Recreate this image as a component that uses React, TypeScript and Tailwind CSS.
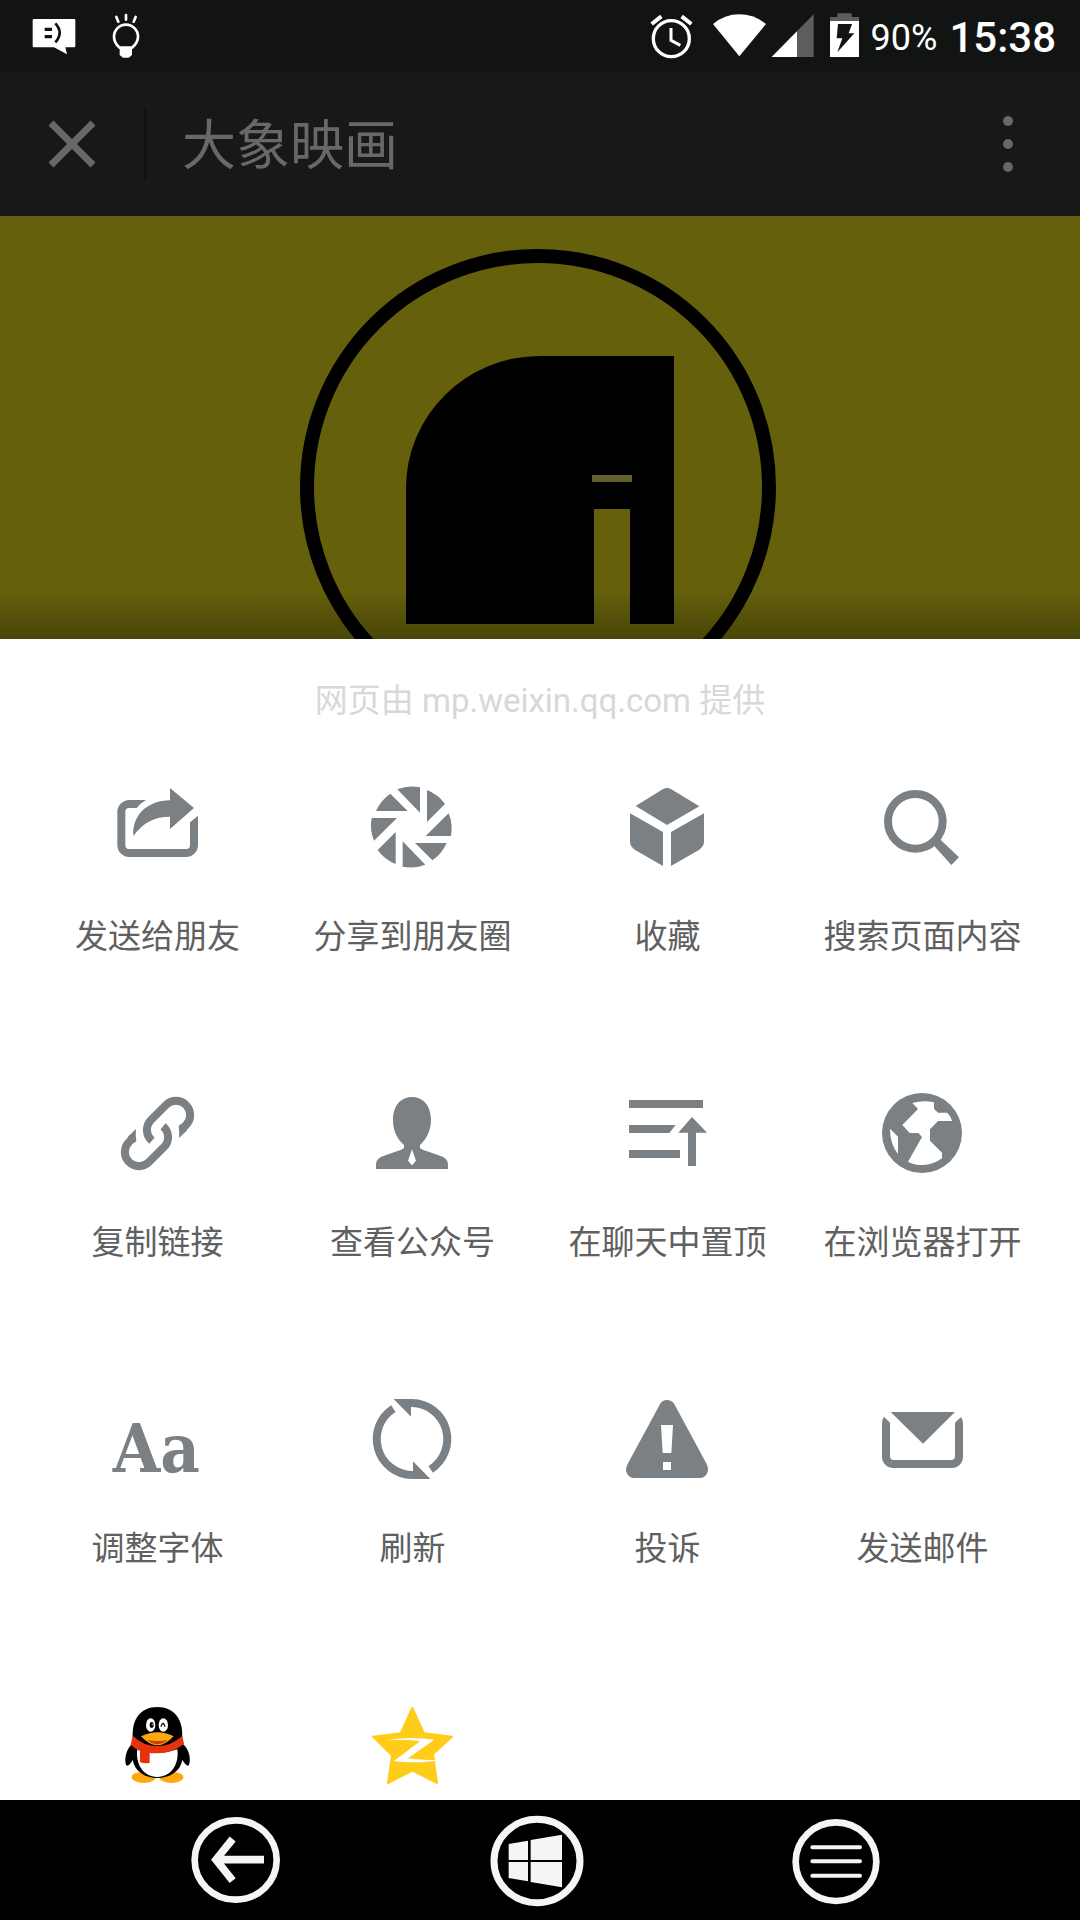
import type { ReactNode } from 'react'

type Action = { label: string; viewBox: string; icon: ReactNode; hideLabel?: boolean }

const chainLink = (
  <>
    <path d="M276 212A42 42 0 0 1 273 150L318 105A42 42 0 0 1 378 165L365 178" fill="none" stroke="currentColor" strokeWidth="24" />
    <path d="M356 169Q359 186 357 204L382 180L362 162Z" />
  </>
)

const shutterHalf = (
  <path d="M1012 88A120 120 0 0 1 1080 82V158ZM1101 90A120 120 0 0 1 1155 132L1101 186ZM1166 160A120 120 0 0 1 1173 228H1097ZM1160 249A120 120 0 0 1 1117 301L1065 249Z" />
)

const refreshHalf = (
  <>
    <path d="M1056 69A108 108 0 0 1 1112 268" fill="none" stroke="currentColor" strokeWidth="24" />
    <path d="M1001 57H1058V81H1053V110Z" />
  </>
)

const actions: Action[] = [
  {
    label: '发送给朋友',
    viewBox: '150 60 285 285',
    icon: (
      <>
        <path d="M258 120H208A36 36 0 0 0 172 156V255A36 36 0 0 0 208 291H378A36 36 0 0 0 414 255V167L390 187V256Q390 267 379 267H207Q196 267 196 256V155Q196 144 207 144H230Q242 129 258 120Z" />
        <path d="M330 84L402 144L330 207V170C285 170 250 186 220 228C216 165 262 122 330 121Z" />
      </>
    ),
  },
  {
    label: '分享到朋友圈',
    viewBox: '915 60 285 285',
    icon: (
      <>
        {shutterHalf}
        <g transform="rotate(180 1054 201)">{shutterHalf}</g>
      </>
    ),
  },
  {
    label: '收藏',
    viewBox: '180 60 285 285',
    icon: (
      <path d="M227 138L308 88Q321 80 334 88L418 139L321 195ZM210 160L309 216V318L224 269Q210 258 210 246ZM432 160L333 216V318L418 269Q432 258 432 246Z" />
    ),
  },
  {
    label: '搜索页面内容',
    viewBox: '945 60 285 285',
    icon: (
      <>
        <circle cx="1066" cy="184" r="82" fill="none" stroke="currentColor" strokeWidth="24" />
        <path d="M1140 238L1197 292L1174 315L1122 257Z" />
      </>
    ),
  },
  {
    label: '复制链接',
    viewBox: '150 48 285 285',
    icon: (
      <>
        {chainLink}
        <g transform="rotate(180 292.5 190.5)">{chainLink}</g>
      </>
    ),
  },
  {
    label: '查看公众号',
    viewBox: '915 48 285 285',
    icon: (
      <>
        <path d="M1056 81C1092 81 1113 110 1113 150C1113 184 1097 210 1080 225V234Q1084 239 1106 245L1148 260Q1164 267 1164 284V297H948V284Q948 267 964 260L1006 245Q1028 239 1032 234V225C1013 209 999 184 999 150C999 110 1020 81 1056 81Z" />
        <path d="M1056 238L1068 272L1056 286L1044 272Z" fill="white" />
      </>
    ),
  },
  {
    label: '在聊天中置顶',
    viewBox: '180 48 285 285',
    icon: (
      <path d="M207 90H429V114H207ZM207 165H347L328 189H207ZM207 240H360V264H207ZM396 141L441 188H408V288H384V188H355Z" />
    ),
  },
  {
    label: '在浏览器打开',
    viewBox: '945 48 285 285',
    icon: (
      <>
        <circle cx="1086" cy="189" r="120" />
        <path
          d="M1057 99Q1090 90 1122 97V116L1134 128H1162Q1172 138 1176 153H1134L1110 178V212L1146 248V265Q1118 286 1086 285Q1062 285 1044 275L1086 201L1075 189H1049L1027 165L1074 117ZM990 176L1014 200V252Q990 222 990 176Z"
          fill="white"
        />
      </>
    ),
  },
  {
    label: '调整字体',
    viewBox: '150 36 285 285',
    icon: (
      <text
        x="289"
        y="276"
        textAnchor="middle"
        className="font-['Liberation_Sans_Narrow','DejaVu_Serif_Condensed','DejaVu_Serif',serif] text-[204px] font-bold"
      >
        Aa
      </text>
    ),
  },
  {
    label: '刷新',
    viewBox: '915 36 285 285',
    icon: (
      <>
        {refreshHalf}
        <g transform="rotate(180 1056 177)">{refreshHalf}</g>
      </>
    ),
  },
  {
    label: '投诉',
    viewBox: '180 36 285 285',
    icon: (
      <>
        <path d="M299 74Q306 60 321 60Q336 60 344 74L440 252Q448 270 440 282Q433 294 420 294H222Q209 294 202 282Q194 270 203 252Z" />
        <path d="M303 135H339L334 219H308ZM309 246H333V270H309Z" fill="white" />
      </>
    ),
  },
  {
    label: '发送邮件',
    viewBox: '945 36 285 285',
    icon: (
      <path d="M992 96H1185L1089 191ZM972 110L990 128V229Q990 240 1001 240H1174Q1185 240 1185 229V128L1203 111Q1209 120 1209 130V230A34 34 0 0 1 1175 264H1000A34 34 0 0 1 966 230V130Q966 118 972 110Z" />
    ),
  },
  {
    label: 'QQ',
    hideLabel: true,
    viewBox: '30 24 285 285',
    icon: (
      <>
        <ellipse cx="131" cy="262" rx="36" ry="17" fill="#ffa70f" />
        <ellipse cx="214" cy="262" rx="36" ry="17" fill="#ffa70f" />
        <path d="M96 162C80 176 72 206 78 224Q84 234 98 210C104 245 136 264 172 264C208 264 241 245 247 210Q262 234 267 224C274 206 266 176 249 162Z" fill="black" />
        <path d="M99 150C92 88 122 51 172 51C222 51 252 88 246 150L240 175H105Z" fill="black" />
        <path d="M112 178Q172 200 232 178C238 220 216 261 172 261C128 261 106 220 112 178Z" fill="white" />
        <path d="M98 137Q130 168 172 168Q214 168 247 137L252 162Q216 190 172 190Q160 190 149 189V218Q134 222 120 216V183Q104 176 92 164Z" fill="#e8320f" />
        <path d="M123 139Q150 127 172 127Q196 127 221 139Q196 166 172 166Q148 166 123 139Z" fill="#ffa70f" />
        <path d="M142 150Q172 156 202 150Q172 176 142 150Z" fill="#c7430b" />
        <ellipse cx="152" cy="105" rx="14" ry="20" fill="white" />
        <ellipse cx="190" cy="105" rx="14" ry="20" fill="white" />
        <ellipse cx="155" cy="105" rx="6" ry="9" fill="black" />
        <circle cx="157" cy="103" r="2" fill="white" />
        <path d="M183 110Q189 90 195 110" fill="none" stroke="black" strokeWidth="4" />
      </>
    ),
  },
  {
    label: 'QQ空间',
    hideLabel: true,
    viewBox: '795 24 285 285',
    icon: (
      <>
        <path
          d="M937 54L972 130L1056 140L999 192L1011 279L937 242L864 279L876 197L819 140L902 130Z"
          fill="#ffcc1a"
          stroke="#ffcc1a"
          strokeWidth="6"
          strokeLinejoin="round"
        />
        <path d="M858 151Q930 138 1003 149L924 205Q976 213 1018 209Q970 222 881 214L960 154Q910 147 858 151Z" fill="white" />
      </>
    ),
  },
]

function StatusBar() {
  return (
    <div className="flex h-[72px] items-center justify-between bg-[#121414] pr-[24px] pl-[32px] text-white">
      <div className="flex items-center gap-[36px]">
        <svg viewBox="96 36 132 144" className="h-[48px] w-[44px]" fill="white">
          <path d="M102 57H222Q226 57 226 61V138Q226 142 222 142H196L201 163L162 142H102Q98 142 98 138V61Q98 57 102 57Z" />
          <path d="M134 83H156V93H134ZM134 105H156V115H134Z" fill="#121414" />
          <path d="M166 70Q192 98 166 127" fill="none" stroke="#121414" strokeWidth="8" />
        </svg>
        <svg viewBox="336 36 84 144" className="h-[48px] w-[28px]" fill="none" stroke="white">
          <path d="M359 143C346 132 342 122 342 110A36 36 0 0 1 414 110C414 122 409 132 396 143Z" strokeWidth="8" />
          <path d="M359 143H396V165L386 173H369L359 165Z" fill="white" stroke="none" />
          <path d="M378 45V59M349 51L355 65M407 51L401 65" strokeWidth="8" strokeLinecap="round" />
        </svg>
      </div>
      <div className="flex items-center">
        <svg viewBox="90 36 129 144" className="h-[48px] w-[43px]" fill="none" stroke="white">
          <circle cx="154" cy="116" r="54" strokeWidth="10" />
          <path d="M153 84V121L181 136" strokeWidth="9" />
          <path d="M95 72L124 49M185 49L214 72" strokeWidth="12" />
        </svg>
        <svg viewBox="276 36 165 144" className="ml-[19px] h-[48px] w-[55px]" fill="white">
          <path d="M279 72Q314 43 358 43Q402 43 438 72L358 169Z" />
        </svg>
        <svg viewBox="453 36 129 144" className="ml-[4px] h-[48px] w-[43px]">
          <path d="M581 43V171H455Z" fill="#5c5e5e" />
          <path d="M531 94V171H455Z" fill="white" />
        </svg>
        <svg viewBox="630 36 87 144" className="ml-[16px] h-[48px] w-[29px]">
          <path d="M630 65V51H652V40H695V51H717V65Z" fill="#5c5e5e" />
          <path d="M630 63H717V171H630Z" fill="white" />
          <path d="M654 72H696L686 100H703L652 157L667 115H650Z" fill="#121414" />
        </svg>
        <span className="ml-[12px] pt-[4px] text-[36px] leading-[48px]">90%</span>
        <span className="ml-[12px] pt-[4px] text-[42px] leading-[48px] font-medium">15:38</span>
      </div>
    </div>
  )
}

function TitleBar() {
  return (
    <header className="flex h-[144px] items-center bg-[#17181a] text-[#686868]">
      <button type="button" aria-label="关闭" className="flex h-full w-[144px] items-center justify-center">
        <svg viewBox="0 0 48 48" className="h-[48px] w-[48px]" fill="none" stroke="currentColor" strokeWidth="7">
          <path d="M3 3L45 45M45 3L3 45" />
        </svg>
      </button>
      <div className="h-[72px] w-[2px] bg-[#101113]" />
      <h1 className="ml-[36px] flex-1 pt-[6px] text-[54px] leading-[72px]">大象映画</h1>
      <button type="button" aria-label="更多" className="flex h-full w-[144px] flex-col items-center justify-center gap-[13px]">
        <span className="h-[10px] w-[10px] rounded-full bg-[#686868]" />
        <span className="h-[10px] w-[10px] rounded-full bg-[#686868]" />
        <span className="h-[10px] w-[10px] rounded-full bg-[#686868]" />
      </button>
    </header>
  )
}

function Banner() {
  return (
    <div className="h-[423px] bg-[#65600b]">
      <svg viewBox="0 0 1080 423" preserveAspectRatio="xMidYMid slice" className="h-full w-full">
        <defs>
          <linearGradient id="shade" x1="0" y1="0" x2="0" y2="1">
            <stop offset="0" stopColor="black" stopOpacity="0" />
            <stop offset="1" stopColor="black" stopOpacity="0.28" />
          </linearGradient>
        </defs>
        <circle cx="538" cy="271" r="231" fill="none" stroke="black" strokeWidth="14" />
        <path d="M540 140H674V408H630V293H594V408H406V272A134 132 0 0 1 540 140Z" />
        <rect x="592" y="259" width="40" height="7" fill="#655f2f" />
        <rect y="375" width="1080" height="48" fill="url(#shade)" />
      </svg>
    </div>
  )
}

function ShareSheet() {
  return (
    <main className="flex-1 bg-white px-[30px] pt-[38px]">
      <p className="mb-[55px] text-center text-[33px] leading-[48px] text-[#d8d8d8]">网页由 mp.weixin.qq.com 提供</p>
      <div className="grid grid-cols-4 gap-y-[125px]">
        {actions.map((action) => (
          <button key={action.label} type="button" aria-label={action.label} className="flex flex-col items-center gap-[38px] whitespace-nowrap">
            <svg viewBox={action.viewBox} className="h-[95px] w-[95px] text-[#7b8084]" fill="currentColor">
              {action.icon}
            </svg>
            {!action.hideLabel && <span className="text-[33px] leading-[48px] text-[#606060]">{action.label}</span>}
          </button>
        ))}
      </div>
    </main>
  )
}

function NavBar() {
  return (
    <nav className="flex h-[120px] items-center justify-center bg-black pr-[8px] text-[#f5f5f5]">
      <button type="button" aria-label="返回" className="flex w-[300px] justify-center">
        <svg viewBox="264 366 288 288" className="h-[96px] w-[96px]" fill="none" stroke="currentColor">
          <ellipse cx="407" cy="510" rx="123" ry="119" strokeWidth="20" />
          <path d="M492 509H350M398 447L348 509L398 572" strokeWidth="23" />
        </svg>
      </button>
      <button type="button" aria-label="主页" className="flex w-[300px] justify-center">
        <svg viewBox="84 96 288 288" className="h-[96px] w-[96px]" fill="currentColor">
          <ellipse cx="231" cy="243" rx="129" ry="125" fill="none" stroke="currentColor" strokeWidth="21" />
          <path d="M146 192L204 182V240H146ZM212 180L306 164V240H212ZM146 246H204V304L146 294ZM212 246H306V322L212 306Z" />
        </svg>
      </button>
      <button type="button" aria-label="菜单" className="flex w-[300px] justify-center">
        <svg viewBox="984 96 288 288" className="h-[96px] w-[96px]" fill="none" stroke="currentColor">
          <ellipse cx="1128" cy="245" rx="121" ry="118" strokeWidth="20" />
          <path d="M1057 202H1200M1057 244H1200M1057 287H1200" strokeWidth="12" strokeLinecap="round" />
        </svg>
      </button>
    </nav>
  )
}

export default function App() {
  return (
    <div className="flex min-h-screen flex-col bg-white font-[Roboto,'Noto_Sans_CJK_SC',sans-serif]">
      <StatusBar />
      <TitleBar />
      <Banner />
      <ShareSheet />
      <NavBar />
    </div>
  )
}
